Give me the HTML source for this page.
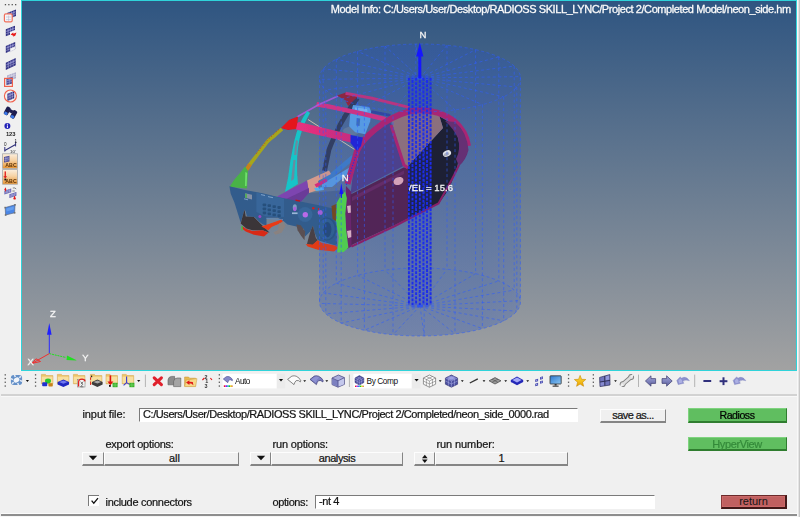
<!DOCTYPE html>
<html><head><meta charset="utf-8">
<style>
html,body{margin:0;padding:0;}
body{width:800px;height:517px;overflow:hidden;background:#f0f0f0;font-family:"Liberation Sans",sans-serif;position:relative;}
.abs{position:absolute;}
#vp{will-change:transform;position:absolute;left:21px;top:0;width:776px;height:371px;box-sizing:border-box;border:1px solid #2fd3da;background:linear-gradient(#2f5581,#a2a2a2);overflow:hidden;}
#vp svg{position:absolute;left:-1px;top:-1px;}
.t,.btn,.inp,.g{-webkit-text-stroke:0.22px currentColor;}
.t{position:absolute;font-size:11px;color:#151515;white-space:nowrap;line-height:14px;}
.btn{position:absolute;box-sizing:border-box;background:#f0f0f0;border-top:1px solid #fdfdfd;border-left:1px solid #fdfdfd;border-right:1px solid #858585;border-bottom:2px solid #858585;font-size:11px;line-height:11px;text-align:center;color:#151515;white-space:nowrap;}
.inp{position:absolute;box-sizing:border-box;background:#fff;border-top:1px solid #7a7a7a;border-left:1px solid #7a7a7a;border-right:1px solid #fff;border-bottom:1px solid #fff;font-size:11px;line-height:11px;padding-left:3px;color:#151515;white-space:nowrap;overflow:hidden;}
.g{position:absolute;box-sizing:border-box;background:#60be60;border-top:1px solid #7fd37f;border-left:1px solid #7fd37f;border-right:1px solid #2f7d2f;border-bottom:2px solid #2f7d2f;font-size:11px;line-height:11px;text-align:center;color:#151515;white-space:nowrap;}
</style></head><body>
<div id="vp">
<svg width="776" height="371" viewBox="21 0 776 371">
<defs>
<linearGradient id="roofg" x1="0" y1="0" x2="1" y2="0"><stop offset="0" stop-color="#e6317f"/><stop offset="1" stop-color="#d42a7a"/></linearGradient>
<linearGradient id="cylg" x1="0" y1="0" x2="1" y2="0"><stop offset="0" stop-color="rgb(42,86,192)" stop-opacity="0.19"/><stop offset="0.35" stop-color="rgb(42,86,192)" stop-opacity="0.26"/><stop offset="0.8" stop-color="rgb(42,86,192)" stop-opacity="0.24"/><stop offset="1" stop-color="rgb(42,86,192)" stop-opacity="0.16"/></linearGradient>
<filter id="soft" x="-5%" y="-5%" width="110%" height="110%"><feGaussianBlur stdDeviation="0.45"/></filter>
</defs>
<path d="M319.5,78.0 A100.5,34.0 0 0 1 520.5,78.0 L520.5,302.0 A100.5,34.0 0 0 1 319.5,302.0 Z" fill="url(#cylg)"/>
<g filter="url(#soft)"><path d="M357.5,98 Q347,112 340,125 Q333,139 329,149.6 L324.5,171" stroke="#323c5c" stroke-width="4.8" fill="none"/><ellipse cx="351.5" cy="131" rx="8.5" ry="4.2" fill="#647a9a"/><polygon points="353.1,105.1 369.2,107.1 371.3,112.1 370.2,121.2 365.2,134.3 355.2,132.3 349.1,126.2 350.1,115.2" fill="#5aa0e6"/><polygon points="356.7,118.0 360.2,118.4 359.6,126.0 356.2,125.4" fill="#3c6ebe"/><polygon points="355.0,107.5 367.0,109.0 367.6,112.0 355.0,110.6" fill="#7ab8f2"/><path d="M371.3,111.6 L390.4,115.4" stroke="#32469e" stroke-width="3" fill="none"/><polygon points="317.0,102.0 330.0,104.4 362.0,111.2 386.0,117.0 384.6,121.4 362.0,116.0 330.0,109.0 316.0,106.6" fill="#d83282"/><path d="M297,117 L318,105 L338,96" stroke="#a55ad6" stroke-width="1.6" fill="none"/><polygon points="337.0,95.5 346.0,92.6 358.2,96.6 353.1,101.0 348.1,106.0 345.0,100.0" fill="#9a2230"/><path d="M345.5,93.2 L372,98.2 L409,107.4" stroke="#cc3078" stroke-width="3" fill="none"/><path d="M308,119.5 L357,151" stroke="#d8c8b0" stroke-width="0.9" fill="none"/><path d="M307,111 Q298,124 294,142 Q290,160 288,178 L285,192 L298,184 Q296,165 298,148 Q300,130 310,113 Z" fill="#14c4c8"/><path d="M293.5,160 Q292,172 291,181 L294,179 Q294.5,170 295.5,160 Z" fill="#6b8aa0"/><path d="M296,140 Q294.5,148 294.2,155 L296.3,155 Q296.7,148 298,141 Z" fill="#6b8aa0"/><polygon points="296.0,123.5 299.0,122.0 351.0,134.5 351.0,142.5 320.0,135.5 296.0,129.5" fill="url(#roofg)"/><polygon points="281.0,128.0 289.0,120.0 298.0,116.5 297.5,122.0 296.0,129.0 288.0,130.0" fill="#e3121a"/><path d="M247,169 Q251,162.5 256,156.5 Q262,148.5 267.5,141.5 Q271,138 275,135.2 L282,129" stroke="#a6a61e" stroke-width="3.6" fill="none"/><path d="M256.5,153.5 Q262,146.5 268,139.6 L280,128.4" stroke="#d03018" stroke-width="1" stroke-dasharray="1 2.2" fill="none"/><path d="M246,170.5 L250,164.2" stroke="#c8801a" stroke-width="4" fill="none"/><polygon points="245.0,166.5 248.0,171.0 247.0,188.5 229.5,187.0 234.0,180.0 240.0,173.0" fill="#49b347"/><polygon points="245.3,172.0 247.2,173.0 246.6,186.0 245.0,186.0" fill="#6fe06a"/><polygon points="352.0,155.0 355.0,159.0 325.0,184.0 321.0,181.0" fill="#3f7cc8"/><polygon points="352.0,166.0 354.0,169.0 332.0,187.0 322.0,187.0 322.0,184.0" fill="#5a9ae0"/><polygon points="307.0,180.5 329.0,170.5 331.0,174.0 318.0,181.0 318.0,190.0 309.0,193.0" fill="#d69a8c"/><polygon points="314.5,184.6 326.0,178.6 327.5,181.2 316.5,187.6" fill="#d62c7c"/><polygon points="314.0,188.0 324.0,187.0 324.0,190.0 316.0,191.0" fill="#55b0f0"/><polygon points="277.0,196.5 307.0,180.5 309.0,193.0 300.0,203.0 284.0,200.0" fill="#7d45b0"/><polygon points="284.0,200.0 309.0,188.0 309.0,193.0 300.0,203.0" fill="#6a3a98"/><polygon points="300.0,203.0 309.0,193.0 345.0,190.0 340.0,210.0 318.0,206.0" fill="#46618f" opacity="0.75"/><polygon points="229.4,186.3 245.1,190.0 262.7,193.2 277.8,197.0 296.3,200.7 317.7,205.1 335.3,208.9 336.6,221.4 337.2,245.9 317.7,240.3 314.6,232.7 312.9,225.8 310.2,231.5 305.1,236.5 303.9,229.0 296.3,226.4 287.5,224.6 284.0,221.5 277.8,217.7 266.5,217.7 266.5,225.2 262.7,224.6 258.9,221.5 254.5,217.0 247.0,216.4 245.7,211.4 244.5,209.5 240.7,222.7 237.6,212.7 234.4,202.6 230.7,193.8" fill="#335c8c"/><polygon points="256.4,192.6 284.0,198.6 284.0,217.0 266.0,216.4 256.4,212.0" fill="#37669a"/><rect x="262.7" y="203.4" width="3.4" height="2.8" rx="0.8" fill="#27507c"/><rect x="267.6" y="204.3" width="3.4" height="2.8" rx="0.8" fill="#27507c"/><rect x="272.5" y="205.2" width="3.4" height="2.8" rx="0.8" fill="#27507c"/><rect x="277.4" y="206.1" width="3.4" height="2.8" rx="0.8" fill="#27507c"/><rect x="262.7" y="207.5" width="3.4" height="2.8" rx="0.8" fill="#27507c"/><rect x="267.6" y="208.4" width="3.4" height="2.8" rx="0.8" fill="#27507c"/><rect x="272.5" y="209.3" width="3.4" height="2.8" rx="0.8" fill="#27507c"/><rect x="277.4" y="210.2" width="3.4" height="2.8" rx="0.8" fill="#27507c"/><rect x="262.7" y="211.6" width="3.4" height="2.8" rx="0.8" fill="#27507c"/><rect x="267.6" y="212.5" width="3.4" height="2.8" rx="0.8" fill="#27507c"/><rect x="272.5" y="213.4" width="3.4" height="2.8" rx="0.8" fill="#27507c"/><rect x="277.4" y="214.3" width="3.4" height="2.8" rx="0.8" fill="#27507c"/><polygon points="245.1,193.2 252.0,194.8 252.0,199.4 245.1,197.8" fill="#8490a6"/><polygon points="245.3,193.4 246.8,193.8 246.8,198.2 245.3,197.8" fill="#49b347"/><path d="M261,194.6 l4,0.9 M268,196.6 l5,1.1 M244,198.8 l4,1" stroke="#8fb0d4" stroke-width="0.8"/><ellipse cx="327.1" cy="229" rx="9.6" ry="11.4" fill="#2a5380"/><ellipse cx="326.2" cy="229" rx="8.6" ry="10.6" fill="#31608f"/><ellipse cx="327.4" cy="229.6" rx="4" ry="7.6" fill="#264c78"/><ellipse cx="305.1" cy="214.5" rx="7.4" ry="7.6" fill="#37669a"/><ellipse cx="305.3" cy="214.7" rx="2.7" ry="2.7" fill="#b86ae8"/><ellipse cx="294.8" cy="207.6" rx="2" ry="3.3" fill="#7f9cc0"/><ellipse cx="294.8" cy="209" rx="1.6" ry="2.2" fill="#a860d8"/><ellipse cx="320.2" cy="212.4" rx="2.5" ry="2.5" fill="#a860d8"/><ellipse cx="259.9" cy="216.4" rx="1.5" ry="1.5" fill="#9a44c0"/><rect x="292" y="212.4" width="5.6" height="1.7" fill="#9ab8d8"/><circle cx="313.3" cy="208.2" r="1.3" fill="#d02020"/><circle cx="318.8" cy="209" r="0.9" fill="#d02020"/><polygon points="295.5,199.4 300.0,200.3 300.0,201.8 295.5,201.0" fill="#c01818"/><path d="M266.5,218.4 L283,219.6" stroke="#5f88b8" stroke-width="1"/><polygon points="244.5,209.5 245.7,216.4 253.9,217.0 259.6,222.7 266.5,229.6 269.6,232.8 262.7,230.3 252.6,230.3 246.4,228.4 240.7,223.4" fill="#3b3437"/><polygon points="242.0,225.9 246.4,229.0 252.6,230.9 262.7,230.3 268.4,232.8 264.0,236.6 253.9,234.7 245.7,231.5 242.0,228.4" fill="#d82a18"/><polygon points="261.4,226.5 281.6,219.6 282.8,222.1 271.5,227.1 268.4,230.3" fill="#e83a18"/><polygon points="279.0,223.4 283.4,221.5 285.3,226.5 281.6,232.8 275.3,234.7 273.4,232.2 277.8,230.3" fill="#8a8280"/><rect x="241.3" y="225.9" width="1.4" height="4.6" fill="#48c040"/><polygon points="296.3,224.6 300.7,225.2 305.1,231.5 304.5,240.3 300.7,235.2 297.6,230.2" fill="#5a5052"/><polygon points="312.9,225.8 315.8,237.8 317.7,240.3 312.7,245.3 307.0,244.0 308.9,236.5 310.8,230.2" fill="#4a4044"/><polygon points="305.8,244.0 312.7,244.6 317.7,240.3 321.5,242.8 337.2,245.9 337.2,249.0 334.0,251.6 317.7,249.7 307.6,246.6" fill="#e23a18"/><polygon points="346.0,186.0 351.5,192.0 352.5,246.0 347.0,249.0 345.0,214.0" fill="#6e2468"/><polygon points="345.1,191.5 346.9,198.2 345.3,213.7 346.1,229.2 348.4,247.8 343.6,252.0 337.2,252.6 338.9,236.9 335.8,221.4 336.6,202.9 340.0,197.0" fill="#52d648"/><polygon points="331.5,206.0 336.4,204.0 336.0,221.0 332.5,219.0" fill="#7a4a18"/><polygon points="347.0,206.0 352.5,205.0 352.5,212.5 348.0,213.0" fill="#e4b4c4"/><polygon points="347.0,231.0 351.8,230.0 352.0,237.0 348.0,238.0" fill="#e4b4c4"/><polygon points="350.5,194.5 403.5,167.4 408.0,168.0 408.0,218.6 394.0,225.5 351.5,245.0" fill="#562250"/><polygon points="352.0,197.0 404.0,170.5 404.0,174.0 352.0,201.0" fill="#7a3074" opacity="0.5"/><polygon points="408.0,166.0 443.0,128.0 439.5,116.5 449.0,122.0 457.0,133.0 460.5,150.0 457.0,168.0 449.0,189.0 439.5,202.5 408.0,218.6" fill="#1c1c2c"/><ellipse cx="398.5" cy="181" rx="5.2" ry="3.8" fill="#e0a8b8" transform="rotate(-25 398.5 181)"/><polygon points="351.0,190.0 355.5,152.0 362.0,140.0 376.0,128.0 389.0,119.0 392.0,126.0 404.5,165.5 351.0,193.5" fill="#4f4089"/><polygon points="391.0,119.0 411.0,110.5 438.0,111.5 443.0,128.0 408.0,166.0 404.5,165.5" fill="#937279"/><ellipse cx="447" cy="153.5" rx="4.3" ry="3" fill="#eeeeee" transform="rotate(-25 447 153.5)"/><ellipse cx="446.5" cy="154.3" rx="3" ry="1.6" fill="#b8b8c0" transform="rotate(-25 446.5 154.3)"/><path d="M347.5,184 L357,151 Q361,141 375,129.5 Q390,117 409,111.4 Q434,106.5 454,121 Q466,131 468,146" stroke="#b2246e" stroke-width="6" fill="none" stroke-linejoin="round"/><path d="M455,122 Q467,132 468.5,150 Q466,160 459,166 L456,159 Q461,150 458,138 Q453,128 445,121 Z" fill="#6a2d6e"/><path d="M459,165 Q452,180 446,190 L438.5,203.5 L394,226.5 L351.5,246.5" stroke="#8e1f62" stroke-width="2" fill="none"/><path d="M391,125 L404,165 L408,168" stroke="#b2246e" stroke-width="3" fill="none"/><polygon points="350.5,135.0 363.0,137.5 361.0,146.0 357.0,151.0 350.5,143.0" fill="#2422d8"/><path d="M358,149 L346,186" stroke="#2030e8" stroke-width="1.2" stroke-dasharray="1.2 1.6" fill="none"/></g>
<path d="M319.5,78.0 A100.5,34.0 0 0 1 520.5,78.0 L520.5,302.0 A100.5,34.0 0 0 1 319.5,302.0 Z" fill="rgba(42,86,192,0.07)"/>
<ellipse cx="420.0" cy="78.0" rx="100.5" ry="34.0" fill="rgba(42,86,192,0.05)"/>
<ellipse cx="420.0" cy="302.0" rx="100.5" ry="34.0" fill="rgba(42,86,192,0.03)"/>
<path d="M415.8,44.0 L415.8,268.0 M420.0,78.0 L415.8,44.0 M420.0,306.0 L415.8,268.0 M447.0,45.3 L447.0,269.3 M420.0,78.0 L447.0,45.3 M420.0,306.0 L447.0,269.3 M475.6,49.7 L475.6,273.7 M420.0,78.0 L475.6,49.7 M420.0,306.0 L475.6,273.7 M498.8,56.9 L498.8,280.9 M420.0,78.0 L498.8,56.9 M420.0,306.0 L498.8,280.9 M514.2,66.1 L514.2,290.1 M420.0,78.0 L514.2,66.1 M420.0,306.0 L514.2,290.1 M520.4,76.6 L520.4,300.6 M420.0,78.0 L520.4,76.6 M420.0,306.0 L520.4,300.6 M516.8,87.1 L516.8,311.1 M420.0,78.0 L516.8,87.1 M420.0,306.0 L516.8,311.1 M503.7,96.8 L503.7,320.8 M420.0,78.0 L503.7,96.8 M420.0,306.0 L503.7,320.8 M482.4,104.6 L482.4,328.6 M420.0,78.0 L482.4,104.6 M420.0,306.0 L482.4,328.6 M455.0,109.9 L455.0,333.9 M420.0,78.0 L455.0,109.9 M420.0,306.0 L455.0,333.9 M424.2,112.0 L424.2,336.0 M420.0,78.0 L424.2,112.0 M420.0,306.0 L424.2,336.0 M393.0,110.7 L393.0,334.7 M420.0,78.0 L393.0,110.7 M420.0,306.0 L393.0,334.7 M364.4,106.3 L364.4,330.3 M420.0,78.0 L364.4,106.3 M420.0,306.0 L364.4,330.3 M341.2,99.1 L341.2,323.1 M420.0,78.0 L341.2,99.1 M420.0,306.0 L341.2,323.1 M325.8,89.9 L325.8,313.9 M420.0,78.0 L325.8,89.9 M420.0,306.0 L325.8,313.9 M319.6,79.4 L319.6,303.4 M420.0,78.0 L319.6,79.4 M420.0,306.0 L319.6,303.4 M323.2,68.9 L323.2,292.9 M420.0,78.0 L323.2,68.9 M420.0,306.0 L323.2,292.9 M336.3,59.2 L336.3,283.2 M420.0,78.0 L336.3,59.2 M420.0,306.0 L336.3,283.2 M357.6,51.4 L357.6,275.4 M420.0,78.0 L357.6,51.4 M420.0,306.0 L357.6,275.4 M385.0,46.1 L385.0,270.1 M420.0,78.0 L385.0,46.1 M420.0,306.0 L385.0,270.1" stroke="#2f5efa" stroke-opacity="0.66" stroke-width="0.9" stroke-dasharray="3 2.6" fill="none"/>
<ellipse cx="420.0" cy="78.0" rx="100.5" ry="34.0" fill="none" stroke="#2f5efa" stroke-opacity="0.66" stroke-width="0.9" stroke-dasharray="3 2.6"/>
<ellipse cx="420.0" cy="302.0" rx="100.5" ry="34.0" fill="none" stroke="#2f5efa" stroke-opacity="0.66" stroke-width="0.9" stroke-dasharray="3 2.6"/>
<path d="M408.0,78 L408.0,304 A11.75,4 0 0 0 431.5,304 L431.5,78 A11.75,3 0 0 0 408.0,78 Z" fill="rgba(30,45,215,0.20)"/>
<path d="M408.9,78 L408.9,305 M416.1,78 L416.1,305 M423.4,78 L423.4,305 M430.6,78 L430.6,305" stroke="#1c2cec" stroke-width="1.9" stroke-dasharray="2.8 1.4" fill="none"/>
<path d="M412.5,78 L412.5,305 M419.8,78 L419.8,305 M427.0,78 L427.0,305" stroke="#1c2cec" stroke-width="1.9" stroke-dasharray="2.8 1.4" stroke-dashoffset="2.1" fill="none"/>
<rect x="418.3" y="52" width="3" height="26" fill="#1616ff"/>
<polygon points="419.8,42.5 423.4,56.5 416.2,56.5" fill="#1616ff"/>
<polygon points="341.3,183.5 343.2,194 339.4,194" fill="#1616ff"/><rect x="340.8" y="192" width="1.1" height="6" fill="#1616ff"/>
<text x="419.6" y="37.6" font-family="Liberation Sans, sans-serif" font-size="9.6" letter-spacing="0" fill="#f4f4f4" stroke="#f4f4f4" stroke-width="0.3" >N</text>
<text x="341.8" y="180.6" font-family="Liberation Sans, sans-serif" font-size="9.6" letter-spacing="0" fill="#f4f4f4" stroke="#f4f4f4" stroke-width="0.3" >N</text>
<clipPath id="velc"><rect x="409.2" y="180" width="60" height="14"/></clipPath>
<text x="405.4" y="190.6" font-family="Liberation Sans, sans-serif" font-size="9.5" letter-spacing="0" fill="#f4f4f4" stroke="#f4f4f4" stroke-width="0.3" textLength="47.6" lengthAdjust="spacing" clip-path="url(#velc)">VEL = 15.6</text>
<text x="330.8" y="13.0" font-family="Liberation Sans, sans-serif" font-size="11" letter-spacing="0" fill="#ffffff" stroke="#f4f4f4" stroke-width="0.3" textLength="460.4" lengthAdjust="spacing">Model Info: C:/Users/User/Desktop/RADIOSS SKILL_LYNC/Project 2/Completed Model/neon_side.hm</text>
<line x1="49.3" y1="353.6" x2="49.3" y2="334" stroke="#2a2aff" stroke-width="1"/>
<polygon points="49.3,323 51.6,334.8 47,334.8" fill="#2020ff"/>
<line x1="49.3" y1="353.6" x2="66" y2="357.5" stroke="#20e020" stroke-width="1" stroke-dasharray="2 0.8"/>
<polygon points="77.1,360.6 66.5,360 67,355.5" fill="#20e020"/>
<line x1="49.3" y1="353.6" x2="32" y2="363.4" stroke="#f03030" stroke-width="1"/>
<polygon points="32,363.4 36,358.8 40.5,361.5" fill="none" stroke="#f03030" stroke-width="1"/>
<text x="49.9" y="316.8" font-family="Liberation Sans, sans-serif" font-size="9.4" letter-spacing="0" fill="#f4f4f4" stroke="#f4f4f4" stroke-width="0.3" >Z</text>
<text x="82.2" y="361.4" font-family="Liberation Sans, sans-serif" font-size="9.4" letter-spacing="0" fill="#f4f4f4" stroke="#f4f4f4" stroke-width="0.3" >Y</text>
<text x="27.6" y="365.0" font-family="Liberation Sans, sans-serif" font-size="9.4" letter-spacing="0" fill="#f4f4f4" stroke="#f4f4f4" stroke-width="0.3" >X</text>
</svg>
</div>
<div style="position:absolute;left:0;top:0;width:800px;height:517px;will-change:opacity;transform:translateZ(0)"><svg class="abs" style="left:0;top:0" width="21" height="222" viewBox="0 0 21 222"><defs><linearGradient id="og" x1="0" y1="0" x2="0" y2="1"><stop offset="0" stop-color="#fbeedd"/><stop offset="0.45" stop-color="#f6d2a4"/><stop offset="1" stop-color="#e8922e"/></linearGradient></defs><rect x="4.8" y="4" width="1.3" height="1.3" fill="#555"/>
<rect x="8.2" y="4" width="1.3" height="1.3" fill="#555"/>
<rect x="11.6" y="4" width="1.3" height="1.3" fill="#555"/>
<rect x="15.0" y="4" width="1.3" height="1.3" fill="#555"/>
<g opacity="1.0"><polygon points="7.0,13.0 16.0,9.5 16.0,16.0 7.0,19.5" fill="#2e2e80"/><polygon points="8.0,13.6 15.0,10.9 15.0,12.9 8.0,15.8" fill="#6a6ac0" opacity="0.55"/><path d="M7.0,15.2 L16.0,11.7 M7.0,17.3 L16.0,13.8 M9.2,12.1 L9.2,18.6 M11.5,11.2 L11.5,17.8 M13.8,10.4 L13.8,16.9" stroke="#b4b4e0" stroke-width="0.5" fill="none"/></g>
<rect x="4.4" y="13.8" width="7.8" height="8" rx="1.4" fill="#f4f4f8" stroke="#f0705c" stroke-width="1.2"/>
<path d="M6,17 H11 M6,19.6 H11 M8.6,15.5 V21" stroke="#b8b8d0" stroke-width="0.6"/>
<g opacity="1.0"><polygon points="5.8,29.2 15.0,25.8 15.0,32.8 5.8,36.2" fill="#2e2e80"/><polygon points="6.8,29.9 14.0,27.1 14.0,29.4 6.8,32.4" fill="#6a6ac0" opacity="0.55"/><path d="M5.8,31.6 L15.0,28.1 M5.8,33.9 L15.0,30.4 M8.1,28.4 L8.1,35.4 M10.4,27.5 L10.4,34.5 M12.7,26.6 L12.7,33.6" stroke="#b4b4e0" stroke-width="0.5" fill="none"/></g>
<polygon points="10.0,32.0 15.2,30.0 15.2,33.8 10.0,35.8" fill="#f4f4f8"/>
<polygon points="10.6,34.6 13.2,32.6 13.4,33.8 16.4,32.6 15.4,35.6 13.2,36.8 13.4,35.8" fill="#e81818"/>
<g opacity="1.0"><polygon points="5.8,45.9 15.2,42.1 15.2,49.1 5.8,52.9" fill="#2e2e80"/><polygon points="6.8,46.5 14.2,43.5 14.2,45.8 6.8,49.0" fill="#6a6ac0" opacity="0.55"/><path d="M5.8,48.2 L15.2,44.4 M5.8,50.6 L15.2,46.8 M8.1,45.0 L8.1,52.0 M10.5,44.0 L10.5,51.0 M12.8,43.0 L12.8,50.0" stroke="#b4b4e0" stroke-width="0.5" fill="none"/></g>
<polygon points="10.2,48.6 15.2,46.6 15.2,49.2 10.2,51.8" fill="#f4f4f8" stroke="#c0c0d0" stroke-width="0.4"/>
<g opacity="1.0"><polygon points="5.8,62.7 15.7,58.1 15.7,65.3 5.8,69.9" fill="#2e2e80"/><polygon points="6.8,63.3 14.7,59.5 14.7,61.9 6.8,65.9" fill="#6a6ac0" opacity="0.55"/><path d="M5.8,65.1 L15.7,60.5 M5.8,67.5 L15.7,62.9 M8.3,61.5 L8.3,68.8 M10.8,60.4 L10.8,67.6 M13.2,59.2 L13.2,66.5" stroke="#b4b4e0" stroke-width="0.5" fill="none"/></g>
<g opacity="0.35"><polygon points="7.0,75.4 16.0,72.2 16.0,78.2 7.0,81.4" fill="#2e2e80"/><polygon points="8.0,76.0 15.0,73.6 15.0,75.4 8.0,78.0" fill="#6a6ac0" opacity="0.55"/><path d="M7.0,77.4 L16.0,74.2 M7.0,79.4 L16.0,76.2 M9.2,74.6 L9.2,80.6 M11.5,73.8 L11.5,79.8 M13.8,73.0 L13.8,79.0" stroke="#b4b4e0" stroke-width="0.5" fill="none"/></g>
<g opacity="1.0"><polygon points="6.5,78.5 12.5,77.0 12.5,83.5 6.5,85.0" fill="#2e2e80"/><polygon points="7.5,79.1 11.5,78.4 11.5,80.4 7.5,81.4" fill="#6a6ac0" opacity="0.55"/><path d="M6.5,80.7 L12.5,79.1 M6.5,82.9 L12.5,81.3 M8.0,78.2 L8.0,84.7 M9.5,77.8 L9.5,84.2 M11.0,77.3 L11.0,83.8" stroke="#b4b4e0" stroke-width="0.5" fill="none"/></g>
<rect x="4.6" y="78.4" width="7.8" height="8" fill="none" stroke="#f0604c" stroke-width="1.2"/>
<g opacity="1.0"><polygon points="7.4,93.7 14.2,90.9 14.2,98.3 7.4,101.1" fill="#2e2e80"/><polygon points="8.4,94.3 13.2,92.3 13.2,94.8 8.4,97.0" fill="#6a6ac0" opacity="0.55"/><path d="M7.4,96.2 L14.2,93.4 M7.4,98.6 L14.2,95.8 M9.1,93.0 L9.1,100.4 M10.8,92.3 L10.8,99.7 M12.5,91.6 L12.5,99.0" stroke="#b4b4e0" stroke-width="0.5" fill="none"/></g>
<circle cx="10.4" cy="96" r="6" fill="none" stroke="#f0604c" stroke-width="1.1"/>
<g transform="translate(10.5,113) rotate(28)"><rect x="-6.2" y="-4.6" width="4.6" height="8.6" rx="1.6" fill="#1c1c50"/><rect x="1.2" y="-4.6" width="4.6" height="8.6" rx="1.6" fill="#1c1c50"/><rect x="-2" y="-3.4" width="3.6" height="3.2" fill="#1c1c50"/><rect x="-5.6" y="1" width="3.4" height="3" rx="1" fill="#3a78e8"/><rect x="1.8" y="1" width="3.4" height="3" rx="1" fill="#3a78e8"/></g>
<circle cx="7.4" cy="126" r="3" fill="#2424b8"/>
<rect x="6.9" y="125.4" width="1" height="2.6" fill="#fff"/><rect x="6.9" y="123.8" width="1" height="1" fill="#fff"/>
<text x="5.9" y="136" font-family="Liberation Sans, sans-serif" font-size="5.8" font-weight="bold" fill="#222">123</text>
<path d="M4.8,150.6 L15.6,144.4" stroke="#30307a" stroke-width="1.1" fill="none"/>
<path d="M4.8,147 V151.6 M15.6,141.4 V146.4" stroke="#30307a" stroke-width="1" fill="none"/>
<text x="4" y="146.2" font-family="Liberation Sans, sans-serif" font-size="4.6" fill="#222">0</text>
<text x="14.6" y="142.6" font-family="Liberation Sans, sans-serif" font-size="4.6" fill="#222">1</text>
<text x="10" y="152.6" font-family="Liberation Sans, sans-serif" font-size="4.4" fill="#222">10'</text>
<rect x="2.6" y="153.8" width="14.8" height="14.6" fill="url(#og)" stroke="#a8a8a8" stroke-width="0.8"/>
<text x="5.2" y="167.0" font-family="Liberation Sans, sans-serif" font-size="5.2" font-weight="bold" fill="#5a3208" letter-spacing="0.1">ABC</text>
<rect x="2.6" y="169.6" width="14.8" height="14.6" fill="url(#og)" stroke="#a8a8a8" stroke-width="0.8"/>
<text x="5.2" y="182.8" font-family="Liberation Sans, sans-serif" font-size="5.2" font-weight="bold" fill="#5a3208" letter-spacing="0.1">ABC</text>
<g opacity="1.0"><polygon points="4.2,157.0 9.4,155.8 9.4,161.4 4.2,162.6" fill="#2e2e80"/><polygon points="5.2,157.6 8.4,157.2 8.4,158.8 5.2,159.4" fill="#6a6ac0" opacity="0.55"/><path d="M4.2,158.9 L9.4,157.7 M4.2,160.7 L9.4,159.5 M5.5,156.7 L5.5,162.3 M6.8,156.4 L6.8,162.0 M8.1,156.1 L8.1,161.7" stroke="#b4b4e0" stroke-width="0.5" fill="none"/></g>
<rect x="4.6" y="171.4" width="1.3" height="5.6" fill="#e01818"/><polygon points="3.4,176.2 7.1,176.2 5.25,178.6" fill="#e01818"/><rect x="4.4" y="178.6" width="1.8" height="1.8" fill="#111"/>
<g opacity="1.0"><polygon points="4.4,190.8 11.2,188.6 11.2,192.2 4.4,194.4" fill="#5858a8"/><polygon points="5.4,191.4 10.2,190.0 10.2,190.6 5.4,192.2" fill="#6a6ac0" opacity="0.55"/><path d="M4.4,192.0 L11.2,189.8 M4.4,193.2 L11.2,191.0 M6.1,190.2 L6.1,193.8 M7.8,189.7 L7.8,193.3 M9.5,189.1 L9.5,192.7" stroke="#b4b4e0" stroke-width="0.5" fill="none"/></g>
<g opacity="1.0"><polygon points="9.4,194.3 16.4,192.1 16.4,195.7 9.4,197.9" fill="#5858a8"/><polygon points="10.4,194.9 15.4,193.5 15.4,194.1 10.4,195.7" fill="#6a6ac0" opacity="0.55"/><path d="M9.4,195.5 L16.4,193.3 M9.4,196.7 L16.4,194.5 M11.2,193.8 L11.2,197.3 M12.9,193.2 L12.9,196.8 M14.6,192.6 L14.6,196.2" stroke="#b4b4e0" stroke-width="0.5" fill="none"/></g>
<polygon points="4.2,190 6.6,190 5.4,187.2" fill="#e01818"/><rect x="4.9" y="189.6" width="1" height="1.8" fill="#e01818"/>
<circle cx="14.6" cy="198.4" r="1.2" fill="#e01818"/><rect x="14.1" y="196" width="1" height="2" fill="#e01818"/>
<path d="M12.8,188 q2.4,-0.6 3.4,1" stroke="#555" stroke-width="0.7" fill="none"/><path d="M12.4,191 h2.4" stroke="#555" stroke-width="0.7"/>
<polygon points="5.2,207.6 15.0,204.8 14.6,212.8 5.6,215.0" fill="#4a86e6" stroke="#5a6a8a" stroke-width="0.7"/>
<polygon points="6.4,208.6 13.8,206.4 13.6,209.4 6.6,211.6" fill="#7ab0f4" opacity="0.6"/>
<rect x="4.4" y="206.8" width="1.6" height="1.6" fill="#707070"/>
<rect x="14.2" y="204.0" width="1.6" height="1.6" fill="#707070"/>
<rect x="13.8" y="212.0" width="1.6" height="1.6" fill="#707070"/>
<rect x="4.8" y="214.2" width="1.6" height="1.6" fill="#707070"/></svg>
<div class="abs" style="left:19.5px;top:0;width:1.5px;height:371px;background:#f8f8f8"></div>
<svg class="abs" style="left:0;top:371px" width="798" height="23" viewBox="0 371 798 23"><defs><linearGradient id="mon" x1="0" y1="0" x2="1" y2="1"><stop offset="0" stop-color="#2c78d0"/><stop offset="1" stop-color="#8cc8f4"/></linearGradient><linearGradient id="arr" x1="0" y1="0" x2="0" y2="1"><stop offset="0" stop-color="#a4a8dc"/><stop offset="1" stop-color="#5c609e"/></linearGradient><linearGradient id="star" x1="0" y1="0" x2="0" y2="1"><stop offset="0" stop-color="#ffe23c"/><stop offset="1" stop-color="#eaa000"/></linearGradient></defs><rect x="4.6" y="374.2" width="1.3" height="1.3" fill="#555"/><rect x="4.6" y="377.9" width="1.3" height="1.3" fill="#555"/><rect x="4.6" y="381.6" width="1.3" height="1.3" fill="#555"/><rect x="4.6" y="385.4" width="1.3" height="1.3" fill="#555"/>
<g transform="translate(16.5,380)"><rect x="-5.6" y="-5" width="11.2" height="10" rx="3" fill="#6490c8"/><ellipse cx="0" cy="0" rx="3" ry="2.4" fill="#f0f4fa" transform="rotate(-30)"/><path d="M-5.6,-1.4 l2,1 M5.6,1.4 l-2,-1 M-2,-5 l0.8,2 M2,5 l-0.8,-2 M-4.4,3.6 l1.6,-1.4 M4.4,-3.6 l-1.6,1.4" stroke="#e8eef8" stroke-width="1.5"/></g>
<polygon points="25.8,380.1 29.0,380.1 27.4,382.1" fill="#111"/>
<rect x="34.9" y="374.2" width="1.3" height="1.3" fill="#555"/><rect x="34.9" y="377.9" width="1.3" height="1.3" fill="#555"/><rect x="34.9" y="381.6" width="1.3" height="1.3" fill="#555"/><rect x="34.9" y="385.4" width="1.3" height="1.3" fill="#555"/>
<path d="M41.4,374.4 h4 l1.1,1.2 h6.4 v8.2 h-11.5 z" fill="#eec468" stroke="#cfa044" stroke-width="0.5"/><rect x="41.8" y="376.6" width="10.7" height="6.4" fill="#f7dfa0"/>
<ellipse cx="48" cy="381" rx="3" ry="2.4" fill="#2cc82c"/><rect x="42.2" y="382.2" width="5" height="4" rx="0.8" fill="#2030d0"/><rect x="48.4" y="383.2" width="4.4" height="3.4" rx="0.8" fill="#c8821a"/>
<path d="M57.4,374.4 h4 l1.1,1.2 h6.4 v8.2 h-11.5 z" fill="#eec468" stroke="#cfa044" stroke-width="0.5"/><rect x="57.8" y="376.6" width="10.7" height="6.4" fill="#f7dfa0"/>
<polygon points="57.6,382.0 63.4,379.6 69.0,382.0 69.0,384.4 63.4,387.0 57.6,384.4" fill="#2028c0"/>
<polygon points="59.0,382.0 63.4,380.4 67.6,382.0 63.4,383.8" fill="#7078f0"/>
<path d="M73.4,374.4 h4 l1.1,1.2 h6.4 v8.2 h-11.5 z" fill="#eec468" stroke="#cfa044" stroke-width="0.5"/><rect x="73.8" y="376.6" width="10.7" height="6.4" fill="#f7dfa0"/>
<rect x="77.4" y="379.4" width="7.6" height="7.6" fill="#f4f4f4" stroke="#777" stroke-width="0.5"/>
<path d="M78.6,386.6 v-4.4 q0,-3 3.4,-3 q2.6,0 3,2.2" stroke="#e02020" stroke-width="1.3" fill="none"/>
<path d="M80.6,381.6 l2.2,2.6 l-2.2,2.6 h2.8 M83.2,381.6 l-2.2,2.6" stroke="#444" stroke-width="0.7" fill="none"/>
<path d="M90.4,374.4 h4 l1.1,1.2 h6.4 v8.2 h-11.5 z" fill="#eec468" stroke="#cfa044" stroke-width="0.5"/><rect x="90.8" y="376.6" width="10.7" height="6.4" fill="#f7dfa0"/>
<polygon points="92.0,382.0 97.4,379.6 102.6,382.0 102.6,384.6 97.4,387.0 92.0,384.6" fill="#3c3c3c"/>
<polygon points="93.4,382.0 97.4,380.4 101.2,382.0 97.4,383.6" fill="#a8a8a8"/>
<path d="M90.6,377.4 v2.4 M90.6,381.6 v3.4" stroke="#e02020" stroke-width="1" fill="none"/><rect x="91" y="375.6" width="1.2" height="1.6" fill="#222"/>
<path d="M106.0,374.4 h4 l1.1,1.2 h6.4 v8.2 h-11.5 z" fill="#eec468" stroke="#cfa044" stroke-width="0.5"/><rect x="106.4" y="376.6" width="10.7" height="6.4" fill="#f7dfa0"/>
<rect x="109.6" y="375.4" width="1.6" height="7.4" fill="#e01010"/><polygon points="107.4,381.6 113.4,381.6 110.4,385.2" fill="#e01010"/><rect x="109" y="385" width="1.8" height="1.8" fill="#111"/>
<rect x="112.6" y="382.8" width="5" height="4.4" fill="#38b028"/><path d="M112.6,385 h5 M115.1,382.8 v4.4" stroke="#8ee080" stroke-width="0.5"/>
<path d="M122.2,374.4 h4 l1.1,1.2 h6.4 v8.2 h-11.5 z" fill="#eec468" stroke="#cfa044" stroke-width="0.5"/><rect x="122.6" y="376.6" width="10.7" height="6.4" fill="#f7dfa0"/>
<path d="M126.6,376.6 v6 l-3,2.8 M126.6,382.6 l3.4,2" stroke="#3838d0" stroke-width="1.1" fill="none"/>
<rect x="129.4" y="382.8" width="5" height="4.4" fill="#38b028"/><path d="M129.4,385 h5 M131.9,382.8 v4.4" stroke="#8ee080" stroke-width="0.5"/>
<polygon points="137.1,380.1 140.3,380.1 138.7,382.1" fill="#111"/>
<rect x="144.9" y="374.6" width="1" height="12.4" fill="#b4b4b4"/>
<path d="M154.2,377.8 L161.4,384.6 M161.4,377.8 L154.2,384.6" stroke="#e0202c" stroke-width="3.1" stroke-linecap="round"/>
<path d="M168,380 q0.4,-3.4 3.6,-3.6 h3 v8.4 h-6.6 z" fill="#8c8c8c" stroke="#5a5a5a" stroke-width="0.6"/>
<path d="M173.6,381.4 q0.4,-3.2 3.6,-3.4 h3.6 v8.6 h-7.2 z" fill="#a4a4a4" stroke="#5a5a5a" stroke-width="0.6"/>
<path d="M184.6,377 h4 l1,1.2 h6 v8 h-11 z" fill="#e8b850" stroke="#c09030" stroke-width="0.5"/>
<polygon points="186.2,380.0 197.0,378.6 195.6,386.6 184.6,386.6" fill="#f6d888" stroke="#c09030" stroke-width="0.4"/>
<polygon points="186.0,382.6 189.4,380.2 189.4,381.8 192.8,382.0 193.4,385.2 191.2,383.6 189.4,383.6 189.4,385.0" fill="#e01818"/>
<text x="204.6" y="378.8" font-family="Liberation Sans, sans-serif" font-size="5.4" font-weight="bold" fill="#333">2</text>
<text x="205.2" y="383.2" font-family="Liberation Sans, sans-serif" font-size="5.4" font-weight="bold" fill="#333">1</text>
<text x="204.6" y="387.6" font-family="Liberation Sans, sans-serif" font-size="5.4" font-weight="bold" fill="#333">3</text>
<path d="M202.4,380 l2,-2 M210.4,378 l1.6,2" stroke="#e01818" stroke-width="1.1"/>
<rect x="218.7" y="374.2" width="1.3" height="1.3" fill="#555"/><rect x="218.7" y="377.9" width="1.3" height="1.3" fill="#555"/><rect x="218.7" y="381.6" width="1.3" height="1.3" fill="#555"/><rect x="218.7" y="385.4" width="1.3" height="1.3" fill="#555"/>
<rect x="222.6" y="373.8" width="54.2" height="14.6" fill="#fff"/><rect x="276.8" y="373.8" width="8.4" height="14.6" fill="#ebebeb"/>
<path transform="translate(223.3,379) scale(0.70)" d="M0,0 L4.3,-3.3 Q6.6,-3.9 8.6,-3.2 Q12.1,-1.6 13.3,1.5 L12.7,2.5 Q11,0.5 8.6,1.2 Q7,2.6 6.4,5.2 Z" fill="#8488ca" stroke="#484a90" stroke-width="0.9" stroke-linejoin="round"/>
<rect x="223.8" y="385.3" width="1.3" height="1.7" fill="#e02020"/>
<rect x="225.1" y="385.3" width="1.3" height="1.7" fill="#e020e0"/>
<rect x="226.3" y="385.3" width="1.3" height="1.7" fill="#2020e0"/>
<rect x="227.6" y="385.3" width="1.3" height="1.7" fill="#20c0e0"/>
<rect x="228.8" y="385.3" width="1.3" height="1.7" fill="#20c020"/>
<rect x="230.1" y="385.3" width="1.3" height="1.7" fill="#e0e020"/>
<rect x="231.3" y="385.3" width="1.3" height="1.7" fill="#e08020"/>
<text x="235" y="383.6" font-family="Liberation Sans, sans-serif" font-size="8.3" letter-spacing="-0.55" fill="#111">Auto</text>
<polygon points="278.9,379.0 283.1,379.0 281.0,381.6" fill="#111"/>
<path transform="translate(287.60,379.40) scale(1.00)" d="M0,0 L4.3,-3.3 Q6.6,-3.9 8.6,-3.2 Q12.1,-1.6 13.3,1.5 L12.7,2.5 Q11,0.5 8.6,1.2 Q7,2.6 6.4,5.2 Z" fill="#fbfbfb" stroke="#555" stroke-width="0.70" stroke-linejoin="round"/>
<polygon points="303.3,380.2 306.1,380.2 304.7,382.0" fill="#111"/>
<path transform="translate(310.00,379.40) scale(1.00)" d="M0,0 L4.3,-3.3 Q6.6,-3.9 8.6,-3.2 Q12.1,-1.6 13.3,1.5 L12.7,2.5 Q11,0.5 8.6,1.2 Q7,2.6 6.4,5.2 Z" fill="#7c80c4" stroke="#34346e" stroke-width="0.70" stroke-linejoin="round"/>
<path d="M311.4,379.4 L315.4,376.6 Q317.6,376.4 319,377.6 Q316.8,379 316,383 Z" fill="#9498d8" opacity="0.7"/>
<polygon points="325.4,380.2 328.2,380.2 326.8,382.0" fill="#111"/>
<polygon points="332.0,378.0 338.4,375.0 344.4,377.6 344.4,384.4 338.0,387.2 332.0,384.6" fill="#a8acdc" stroke="#40407a" stroke-width="0.7"/>
<polygon points="332.4,378.4 338.0,380.8 338.0,386.8 332.4,384.4" fill="#7c80c0"/>
<polygon points="338.6,381.0 344.0,378.4 344.0,384.2 338.6,386.6" fill="#c4c8ec"/>
<path d="M332,378 L338,380.8 L344.4,377.6 M338,380.8 V387.2" stroke="#40407a" stroke-width="0.6" fill="none"/>
<rect x="348.9" y="374.6" width="1" height="12.4" fill="#b4b4b4"/>
<rect x="353.4" y="373.8" width="58.4" height="14.6" fill="#fff"/><rect x="411.8" y="373.8" width="8.8" height="14.6" fill="#ebebeb"/>
<polygon points="355.0,378.0 359.4,375.6 363.8,378.0 363.8,382.6 359.4,385.0 355.0,382.6" fill="#4a4e9c" stroke="#2a2a6a" stroke-width="0.5"/>
<path d="M355,378 L359.4,380.2 L363.8,378 M359.4,380.2 V385 M357.2,376.8 L361.6,379.2 V384 M361.6,376.8 L357.2,379.2 V384 M355,380.2 L359.4,382.6 L363.8,380.2" stroke="#b0b4e8" stroke-width="0.45" fill="none"/>
<rect x="355.0" y="385.6" width="1.3" height="1.4" fill="#e02020"/>
<rect x="356.2" y="385.6" width="1.3" height="1.4" fill="#e020e0"/>
<rect x="357.5" y="385.6" width="1.3" height="1.4" fill="#2020e0"/>
<rect x="358.8" y="385.6" width="1.3" height="1.4" fill="#20c0e0"/>
<rect x="360.0" y="385.6" width="1.3" height="1.4" fill="#20c020"/>
<rect x="361.2" y="385.6" width="1.3" height="1.4" fill="#e0e020"/>
<rect x="362.5" y="385.6" width="1.3" height="1.4" fill="#e08020"/>
<text x="366.6" y="383.6" font-family="Liberation Sans, sans-serif" font-size="8.3" letter-spacing="-0.45" fill="#111">By Comp</text>
<polygon points="414.5,379.0 418.7,379.0 416.6,381.6" fill="#111"/>
<polygon points="423.4,378.0 429.4,375.0 435.6,378.0 435.6,384.2 429.4,387.2 423.4,384.2" fill="#fafafa" stroke="#555" stroke-width="0.6"/>
<path d="M423.4,378 L429.4,381 L435.6,378 M429.4,381 V387.2 M423.4,381 L429.4,384 L435.6,381 M426.4,376.5 L432.5,379.5 V385.7 M432.5,376.5 L426.4,379.5 V385.7" stroke="#666" stroke-width="0.5" fill="none"/>
<polygon points="438.8,380.2 441.6,380.2 440.2,382.0" fill="#111"/>
<polygon points="445.4,378.0 451.4,375.0 457.6,378.0 457.6,384.2 451.4,387.2 445.4,384.2" fill="#4c50a0" stroke="#2a2a6a" stroke-width="0.6"/>
<polygon points="446.4,378.0 451.4,375.8 456.6,378.0 451.4,380.4" fill="#8c90d8"/>
<path d="M445.4,378 L451.4,381 L457.6,378 M451.4,381 V387.2 M445.4,381 L451.4,384 L457.6,381 M448.4,376.5 L454.5,379.5 V385.7 M454.5,376.5 L448.4,379.5 V385.7" stroke="#b8bcf0" stroke-width="0.45" fill="none"/>
<polygon points="460.9,380.2 463.7,380.2 462.3,382.0" fill="#111"/>
<path d="M469.8,383 L477.8,378.8" stroke="#333" stroke-width="1.3"/>
<polygon points="482.6,380.2 485.4,380.2 484.0,382.0" fill="#111"/>
<polygon points="489.0,380.8 495.0,377.6 501.0,380.8 495.0,384.0" fill="#9a9a9a" stroke="#444" stroke-width="0.7"/>
<path d="M492,379.2 L498,382.4 M498,379.2 L492,382.4" stroke="#444" stroke-width="0.5"/>
<polygon points="504.3,380.2 507.1,380.2 505.7,382.0" fill="#111"/>
<polygon points="510.8,380.0 517.0,376.4 523.2,380.0 523.2,382.0 517.0,385.2 510.8,382.0" fill="#2428b8"/>
<polygon points="512.4,380.0 517.0,377.4 521.6,380.0 517.0,382.4" fill="#a4a8f8"/>
<polygon points="526.3,380.2 529.1,380.2 527.7,382.0" fill="#111"/>
<polygon points="540.0,377.2 542.9,376.3 542.9,378.9 540.0,379.7" fill="#4a4eb0"/>
<rect x="540.9" y="377.4" width="1.1" height="1.1" fill="#a8acec"/>
<polygon points="535.2,379.6 538.1,378.7 538.1,381.3 535.2,382.1" fill="#4a4eb0"/>
<rect x="536.1" y="379.8" width="1.1" height="1.1" fill="#a8acec"/>
<polygon points="540.0,381.3 542.9,380.4 542.9,383.0 540.0,383.8" fill="#4a4eb0"/>
<rect x="540.9" y="381.5" width="1.1" height="1.1" fill="#a8acec"/>
<polygon points="535.2,383.7 538.1,382.8 538.1,385.4 535.2,386.2" fill="#4a4eb0"/>
<rect x="536.1" y="383.9" width="1.1" height="1.1" fill="#a8acec"/>
<rect x="550" y="375.8" width="11.2" height="8.2" rx="0.6" fill="url(#mon)" stroke="#333" stroke-width="0.8"/>
<rect x="554.6" y="384" width="2" height="1.6" fill="#333"/><rect x="552.6" y="385.6" width="6" height="1.1" fill="#333"/>
<rect x="567.9" y="374.2" width="1.3" height="1.3" fill="#555"/><rect x="567.9" y="377.9" width="1.3" height="1.3" fill="#555"/><rect x="567.9" y="381.6" width="1.3" height="1.3" fill="#555"/><rect x="567.9" y="385.4" width="1.3" height="1.3" fill="#555"/>
<polygon points="580.1,375.4 581.6,379.3 585.8,379.5 582.6,382.2 583.6,386.3 580.1,384.0 576.6,386.3 577.6,382.2 574.4,379.5 578.6,379.3" fill="url(#star)" stroke="#c88a00" stroke-width="0.6" stroke-linejoin="round"/>
<rect x="592.7" y="374.2" width="1.3" height="1.3" fill="#555"/><rect x="592.7" y="377.9" width="1.3" height="1.3" fill="#555"/><rect x="592.7" y="381.6" width="1.3" height="1.3" fill="#555"/><rect x="592.7" y="385.4" width="1.3" height="1.3" fill="#555"/>
<polygon points="599.6,377.4 609.8,374.6 610.0,385.0 600.0,386.6" fill="#7074bc" stroke="#2c2c58" stroke-width="0.7"/>
<polygon points="605.6,376.6 609.0,375.6 609.2,379.6 605.6,380.2" fill="#9ca0e4" opacity="0.8"/>
<polygon points="600.6,382.6 604.0,382.1 604.0,385.2 600.8,385.7" fill="#8c90d4" opacity="0.8"/>
<path d="M604.7,376 L604.9,385.8 M599.8,382 L610,380.4" stroke="#2a2a4e" stroke-width="0.9"/>
<polygon points="614.1,380.2 616.9,380.2 615.5,382.0" fill="#111"/>
<g stroke-linecap="round"><path d="M623.6,383.4 L630.2,377.8" stroke="#808080" stroke-width="4.4"/><circle cx="622.6" cy="384.2" r="2.9" fill="#808080"/><circle cx="631.2" cy="377" r="2.9" fill="#808080"/><path d="M623.6,383.4 L630.2,377.8" stroke="#dedede" stroke-width="2.6"/><circle cx="622.6" cy="384.2" r="2" fill="#dedede"/><circle cx="631.2" cy="377" r="2" fill="#dedede"/><path d="M622.4,384.6 L620.2,386.8" stroke="#f0f0f0" stroke-width="1.7"/><path d="M631.4,376.6 L633.6,374.4" stroke="#f0f0f0" stroke-width="1.7"/></g>
<rect x="638.0" y="374.6" width="1" height="12.4" fill="#b4b4b4"/>
<polygon points="645.4,381.0 651.0,375.8 651.0,378.6 655.6,378.6 655.6,383.4 651.0,383.4 651.0,386.2" fill="url(#arr)" stroke="#3c3c70" stroke-width="0.7"/>
<polygon points="672.2,381.0 666.6,375.8 666.6,378.6 662.0,378.6 662.0,383.4 666.6,383.4 666.6,386.2" fill="url(#arr)" stroke="#3c3c70" stroke-width="0.7"/>
<path transform="translate(676.8,0)" d="M12.6,380.7 Q9.2,375.6 4.8,378.2 L3.4,376.9 L0,380.4 L1.4,384.6 L7.2,383.2 L5.8,381.6 Q8.6,379.2 12.6,380.7 Z" fill="#8c90ce" stroke="#7478b8" stroke-width="0.4"/><path transform="translate(676.8,0)" d="M1.6,380.6 L3.6,378.4 L5,380 L5.6,382.6 L2.4,383.4 Z" fill="#b4b8e8" opacity="0.8"/>
<rect x="694.2" y="374.6" width="1" height="12.4" fill="#b4b4b4"/>
<rect x="703.4" y="380" width="7.8" height="2" fill="#30307c"/>
<rect x="719.6" y="380.2" width="7.8" height="2" fill="#30307c"/><rect x="722.5" y="377.3" width="2" height="7.8" fill="#30307c"/>
<path transform="translate(733.2,0)" d="M12.6,380.7 Q9.2,375.6 4.8,378.2 L3.4,376.9 L0,380.4 L1.4,384.6 L7.2,383.2 L5.8,381.6 Q8.6,379.2 12.6,380.7 Z" fill="#8c90ce" stroke="#7478b8" stroke-width="0.4"/><path transform="translate(733.2,0)" d="M1.6,380.6 L3.6,378.4 L5,380 L5.6,382.6 L2.4,383.4 Z" fill="#b4b8e8" opacity="0.8"/></svg>
<!-- separator -->
<div class="abs" style="left:1px;top:394px;width:796px;height:2px;background:#d2d2d2"></div><div class="abs" style="left:1px;top:396px;width:796px;height:1px;background:#f8f8f8"></div>
<!-- panel -->
<div class="t" style="left:82.5px;top:407px;letter-spacing:-0.1px">input file:</div>
<div class="inp" style="left:139px;top:408px;width:439px;height:14px;letter-spacing:-0.42px">C:/Users/User/Desktop/RADIOSS SKILL_LYNC/Project 2/Completed/neon_side_0000.rad</div>
<div class="btn" style="left:600px;top:408.5px;width:66px;height:14px;letter-spacing:-0.55px">save as...</div>
<div class="g" style="left:687.5px;top:408px;width:99px;height:14.5px;color:#000;font-size:10.6px;line-height:12px;letter-spacing:-0.48px">Radioss</div>
<div class="g" style="left:687.5px;top:437px;width:99px;height:14px;color:#348a3a;line-height:12px;letter-spacing:-0.4px">HyperView</div>

<div class="t" style="left:105.5px;top:437px;letter-spacing:-0.27px">export options:</div>
<div class="btn" style="left:82px;top:452px;width:22px;height:14px"></div><svg class="abs" style="left:88px;top:455px" width="10" height="6"><polygon points="0.8,0.8 9.2,0.8 5,5.3" fill="#111"/></svg>
<div class="btn" style="left:104px;top:452px;width:135px;height:14px;padding-left:6px">all</div>
<div class="t" style="left:272.5px;top:437px;letter-spacing:-0.17px">run options:</div>
<div class="btn" style="left:250px;top:452px;width:21px;height:14px"></div><svg class="abs" style="left:255.5px;top:455px" width="10" height="6"><polygon points="0.8,0.8 9.2,0.8 5,5.3" fill="#111"/></svg>
<div class="btn" style="left:271px;top:452px;width:132px;height:14px;letter-spacing:-0.4px">analysis</div>
<div class="t" style="left:436.5px;top:437px;letter-spacing:-0.1px">run number:</div>
<div class="btn" style="left:414px;top:452px;width:21px;height:14px"></div><svg class="abs" style="left:421px;top:454px" width="8" height="10"><polygon points="1,4.3 6.6,4.3 3.8,0.8" fill="#111"/><polygon points="1,5.5 6.6,5.5 3.8,9" fill="#111"/></svg>
<div class="btn" style="left:435px;top:452px;width:133px;height:14px">1</div>

<div class="abs" style="left:88px;top:495px;width:11px;height:11px;box-sizing:border-box;background:#fff;border-top:1px solid #7a7a7a;border-left:1px solid #7a7a7a;"></div><svg class="abs" style="left:88px;top:495px" width="12" height="12"><path d="M3.6,5.6 L5.8,8.2 L10,3.2" stroke="#111" stroke-width="1.3" fill="none"/></svg>
<div class="t" style="left:105.5px;top:494.5px;letter-spacing:-0.3px">include connectors</div>
<div class="t" style="left:272.5px;top:494.5px;letter-spacing:-0.4px">options:</div>
<div class="inp" style="left:315px;top:495px;width:340px;height:14px;letter-spacing:-0.4px">-nt 4</div>
<div class="abs" style="left:721px;top:495px;width:66px;height:14px;box-sizing:border-box;background:#c06060;box-shadow:inset 1px 1px 0 #cb6969, inset -1px -1px 0 #cb6969;border-top:1px solid #6a2a2a;border-left:1px solid #8a3a3a;border-right:2px solid #421818;border-bottom:2px solid #421818;font-size:11px;line-height:10px;text-align:center;color:#151515">return</div>
<!-- bottom/right edges -->
<div class="abs" style="left:1px;top:513px;width:797px;height:1px;background:#fbfbfb"></div>
<div class="abs" style="left:1px;top:514px;width:797px;height:2px;background:#8e8e8e"></div>
<div class="abs" style="left:0;top:516px;width:800px;height:1px;background:#f6f6f6"></div>
<div class="abs" style="left:797px;top:0;width:1px;height:517px;background:#f8f8f8"></div><div class="abs" style="left:798px;top:0;width:1px;height:517px;background:#e4e4e4"></div><div class="abs" style="left:799px;top:0;width:1px;height:517px;background:#c8c8c8"></div>
</div>
</body></html>
